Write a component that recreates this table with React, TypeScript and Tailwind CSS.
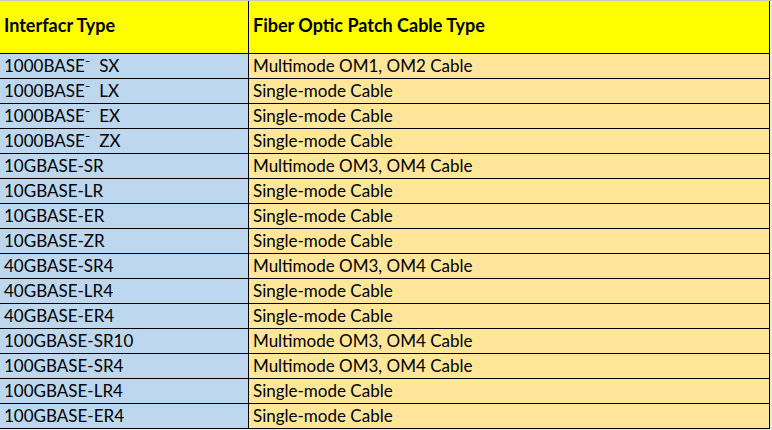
import { Fragment } from 'react';

const rows: [string, string][] = [
  ['1000BASE⁻  SX', 'Multimode OM1, OM2 Cable'],
  ['1000BASE⁻  LX', 'Single-mode Cable'],
  ['1000BASE⁻  EX', 'Single-mode Cable'],
  ['1000BASE⁻  ZX', 'Single-mode Cable'],
  ['10GBASE-SR', 'Multimode OM3, OM4 Cable'],
  ['10GBASE-LR', 'Single-mode Cable'],
  ['10GBASE-ER', 'Single-mode Cable'],
  ['10GBASE-ZR', 'Single-mode Cable'],
  ['40GBASE-SR4', 'Multimode OM3, OM4 Cable'],
  ['40GBASE-LR4', 'Single-mode Cable'],
  ['40GBASE-ER4', 'Single-mode Cable'],
  ['100GBASE-SR10', 'Multimode OM3, OM4 Cable'],
  ['100GBASE-SR4', 'Multimode OM3, OM4 Cable'],
  ['100GBASE-LR4', 'Single-mode Cable'],
  ['100GBASE-ER4', 'Single-mode Cable'],
];

export default function App() {
  return (
    <div className="h-[430px] w-[772px] overflow-hidden bg-[#e2eee2] font-['Lato',sans-serif] text-[17px] text-black">
      <div className="h-px w-full bg-[#c8c8c8]" />
      {/* black bg + 1px gaps draw the cell borders */}
      <div className="grid w-[770px] grid-cols-[248px_520px] gap-px bg-black pr-px pb-px">
        <div className="flex h-[52px] items-center bg-[#ffff00] pb-1 pl-1 text-[18px] font-bold">Interfacr Type</div>
        <div className="flex h-[52px] items-center bg-[#ffff00] pb-1 pl-1 text-[18px] font-bold">
          Fiber Optic Patch Cable Type
        </div>
        {rows.map(([iface, cable]) => (
          <Fragment key={iface}>
            <div className="flex h-6 items-center whitespace-pre bg-[#bdd7ee] pl-1">{iface}</div>
            <div className="flex h-6 items-center bg-[#ffe699] pl-1">{cable}</div>
          </Fragment>
        ))}
      </div>
    </div>
  );
}
